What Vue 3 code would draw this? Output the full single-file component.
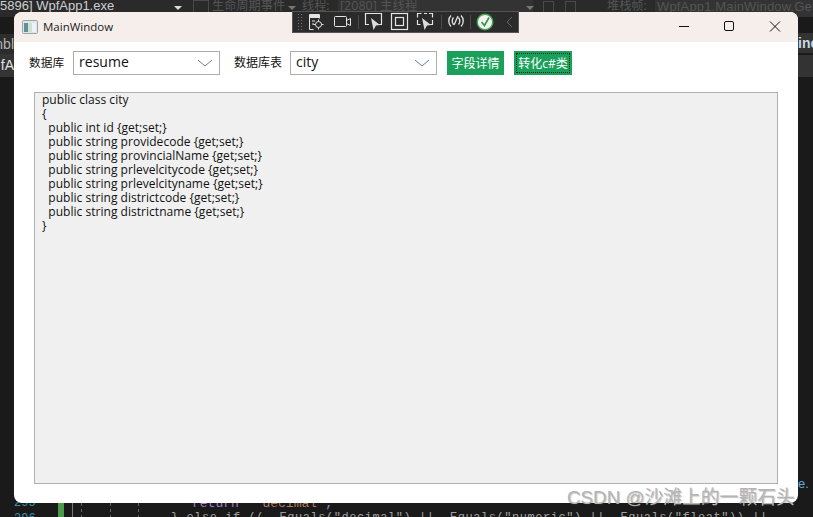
<script setup>
const code = [
  'public class city',
  '{',
  '  public int id {get;set;}',
  '  public string providecode {get;set;}',
  '  public string provincialName {get;set;}',
  '  public string prlevelcitycode {get;set;}',
  '  public string prlevelcityname {get;set;}',
  '  public string districtcode {get;set;}',
  '  public string districtname {get;set;}',
  '}'
].join('\n')
</script>

<template>
  <div class="desktop">
    <div class="ide-top">
      <span class="proc">5896] WpfApp1.exe</span>
      <i class="tri t1"></i>
      <span class="cell-icon"></span>
      <span class="dim life">生命周期事件</span>
      <i class="tri t2"></i>
      <span class="dim thread">线程:</span>
      <span class="dim threadbox">[2080] 主线程</span>
      <i class="tri t3"></i>
      <span class="mini m1"></span>
      <span class="mini m2"></span>
      <span class="dim stack">堆栈帧:</span>
      <span class="dim frame">WpfApp1.MainWindow.Get</span>
    </div>
    <div class="tab tab-a">nbl</div>
    <div class="tab tab-b">fA</div>
    <div class="tab tab-c">ine</div>
    <div class="tab tab-d"></div>
    <div class="ide-bottom">
      <span class="gutter g1">295</span>
      <span class="gutter g2">296</span>
      <span class="change"></span>
      <i class="guide solid"></i>
      <i class="guide d1"></i>
      <i class="guide d2"></i>
      <i class="guide d3"></i>
      <span class="ret"><b>return</b> <em>"decimal"</em>;</span>
      <span class="next">} else if ((    .Equals("decimal") ||      .Equals("numeric") ||      .Equals("float")) ||</span>
      <span class="stub">e.</span>
    </div>

    <section class="window">
      <header class="titlebar">
        <svg class="appicon" width="16" height="14" viewBox="0 0 16 14">
          <rect x="0.5" y="0.5" width="15" height="13" rx="1" fill="#dfe6ea" stroke="#9aa4ab" />
          <rect x="2" y="3" width="4" height="9" fill="#5f8f98" />
          <rect x="6" y="3" width="4" height="9" fill="#cfe2d0" />
          <rect x="10" y="3" width="4" height="9" fill="#eef2f4" />
        </svg>
        <span class="title">MainWindow</span>
        <div class="controls">
          <svg width="46" height="30" viewBox="0 0 46 30"><path d="M19 14.5h10" stroke="#111" stroke-width="1" /></svg>
          <svg width="46" height="30" viewBox="0 0 46 30"><rect x="18.5" y="9.5" width="9" height="9" rx="1.5" fill="none" stroke="#111" /></svg>
          <svg width="46" height="30" viewBox="0 0 46 30"><path d="M18 9.500l10 10M28 9.500l-10 10" stroke="#111" /></svg>
        </div>
      </header>
      <div class="form">
        <label class="lab first">数据库</label>
        <div class="combo">
          <span>resume</span>
          <svg width="16" height="8" viewBox="0 0 16 8"><path d="M1 1l7 6 7-6" fill="none" stroke="#5f7f9f" /></svg>
        </div>
        <label class="lab second">数据库表</label>
        <div class="combo">
          <span>city</span>
          <svg width="16" height="8" viewBox="0 0 16 8"><path d="M1 1l7 6 7-6" fill="none" stroke="#5f7f9f" /></svg>
        </div>
        <button class="btn b1" type="button">字段详情</button>
        <button class="btn b2" type="button"><span class="focus">转化c#类</span></button>
      </div>
      <pre class="code">{{ code }}</pre>
    </section>

    <div class="debugbar">
      <span class="grip"></span>
      <svg class="tools" width="160" height="20" viewBox="0 0 160 20" fill="none" stroke="#e4e4e4">
        <path d="M2.500 17.500v-15h10v4M2.500 5.500h10" />
        <path d="M2.500 4h10" stroke-width="2" />
        <path d="M5 9h3M5 12h2M2.500 17.500h4" />
        <circle cx="11.500" cy="12.500" r="3" />
        <path d="M11.500 7.500v2M11.500 15.500v2M6.500 12.500h2M14.500 12.500h2" />
        <rect x="27.500" y="4.500" width="12" height="10" rx="1" />
        <path d="M39.500 8.500l4-2v7l-4-2" />
        <path d="M62 12.500h-3.500v-11h16v11h-4" stroke-width="1.200" />
        <path d="M64 6l9 7-4 .5-2.500 4.500z" fill="#ddd" stroke="none" />
        <rect x="84.500" y="1.500" width="16" height="16" stroke-width="1.200" />
        <rect x="88.500" y="5.500" width="8" height="8" stroke-width="1.200" />
        <path d="M110.500 5.500v-4h4M117 1.500h3M122 1.500h3.500v4M110.500 8v4.500h3M125.500 8v4.500h-3" stroke-width="1.200" />
        <path d="M115 6l9 7-4 .5-2.500 4.500z" fill="#ddd" stroke="none" />
        <path d="M144 3.500c-3 3-3 8 0 11M154 3.500c3 3 3 8 0 11M146.500 5.500c-1.500 2-1.500 5 0 7M151.500 5.500c1.500 2 1.500 5 0 7M147 13l4-9" stroke-width="1.300" />
      </svg>
      <svg class="check" width="18" height="18" viewBox="0 0 18 18">
        <circle cx="9" cy="9" r="7.800" fill="#f2f2f2" stroke="#3fa34d" stroke-width="1.400" />
        <path d="M5.500 9l3 3.500L13 4.500" fill="none" stroke="#2f9a3f" stroke-width="1.600" />
      </svg>
      <svg class="back" width="7" height="12" viewBox="0 0 7 12"><path d="M6 1L1 6l5 5" fill="none" stroke="#666" /></svg>
      <i class="sep s1"></i><i class="sep s2"></i><i class="sep s3"></i>
    </div>

    <div class="mark">CSDN @沙滩上的一颗石头</div>
  </div>
</template>

<style>
html, body { margin: 0; background: #1a1a1a; }
</style>

<style scoped>
.desktop {
  position: relative;
  width: 813px;
  height: 517px;
  overflow: hidden;
  background: #1a1a1a;
  font-family: "Open Sans", "Noto Sans CJK SC", sans-serif;
}
.ide-top {
  position: absolute;
  inset: 0 0 auto 0;
  height: 17px;
  background: #2a2a2b;
  color: #cfcfcf;
  font-size: 13px;
  line-height: 14px;
  white-space: nowrap;
}
.ide-top > * { position: absolute; top: -1px; }
.proc { left: 0; font-family: "Liberation Sans", sans-serif; font-size: 13px; }
.dim { color: #555; }
.tri { width: 0; height: 0; border: 4px solid transparent; border-top: 4px solid #ddd; border-bottom: 0; top: 6px !important; }
.t1 { left: 174px; }
.t2 { left: 288px; border-top-color: #777; }
.t3 { left: 526px; border-top-color: #777; z-index: 1; }
.cell-icon { left: 193px; top: 0 !important; width: 14px; height: 11px; border: 1px solid #4a4a4a; }
.life { left: 212px; font-size: 12.200px; }
.thread { left: 302px; font-size: 12.200px; }
.threadbox { left: 338px; width: 193px; background: #333; height: 17px; top: 0 !important; padding-left: 2px; font-size: 12.500px; line-height: 12px; }
.mini { top: 1px !important; width: 9px; height: 10px; border: 1px solid #4a4a4a; }
.m1 { left: 543px; }
.m2 { left: 565px; }
.stack { left: 607px; font-size: 12.200px; }
.frame { left: 655px; width: 158px; background: #333; height: 17px; top: 0 !important; padding-left: 2px; font-family: "Liberation Sans", sans-serif; font-size: 13px; line-height: 13px; letter-spacing: .15px; }
.tab {
  position: absolute;
  height: 20px;
  line-height: 20px;
  color: #b5b5b5;
  font-size: 14px;
  font-family: "Liberation Sans", sans-serif;
  overflow: hidden;
}
.tab-a { left: 0; top: 34px; width: 14px; direction: rtl; background: #2c2c2c; }
.tab-b { left: 0; top: 54px; width: 14px; height: 23px; line-height: 23px; direction: rtl; color: #e0e0e0; background: #343434; }
.tab-c { left: 798px; top: 33px; width: 15px; color: #c9d7e0; font-weight: bold; background: #333; }
.tab-d { left: 798px; top: 55px; width: 15px; height: 22px; background: #333; }
.ide-bottom {
  position: absolute;
  inset: 503px 0 0 0;
  background: #1a1a1a;
  font-family: "Liberation Mono", monospace;
  font-size: 13px;
  white-space: nowrap;
}
.ide-bottom > * { position: absolute; }
.gutter { left: 14px; color: #3d8fa8; font-size: 12px; }
.g1 { top: -7px; }
.g2 { top: 9px; }
.change { left: 58px; top: 0; width: 6px; height: 14px; background: #4c9a4c; }
.guide { top: 0; bottom: 0; width: 1px; }
.solid { left: 72px; background: #777; }
.d1, .d2, .d3 { background: repeating-linear-gradient(#666 0 3px, transparent 3px 6px); }
.d1 { left: 81px; }
.d2 { left: 110px; }
.d3 { left: 138px; }
.ret { left: 192px; top: -7px; color: #a97cc8; }
.ret b { font-weight: normal; }
.ret em { font-style: normal; color: #b0795c; margin-left: 8px; }
.next { left: 171px; top: 8px; color: #a0a0a0; font-size: 12px; letter-spacing: .55px; }
.stub { left: 798px; top: -27px; color: #5fa8d8; font-family: "Liberation Sans", sans-serif; }
.window {
  position: absolute;
  left: 14px;
  top: 12px;
  width: 784px;
  height: 491px;
  background: #fff;
  border-radius: 8px;
  overflow: hidden;
  display: flex;
  flex-direction: column;
}
.titlebar {
  height: 30px;
  flex: none;
  background: #f6eeeb;
  display: flex;
  align-items: center;
  padding-left: 8px;
}
.appicon { margin-right: 5px; }
.title {
  font-size: 11.500px;
  color: #1a1a1a;
  padding-bottom: 2px;
}
.controls { margin-left: auto; display: flex; }
.controls svg { display: block; }
.form {
  height: 24px;
  margin: 9px 0 0 15px;
  display: flex;
  align-items: center;
}
.lab { font-size: 11.700px; color: #111; white-space: nowrap; padding-bottom: 3px; }
.second { margin-left: 14px; font-size: 12px; margin-right: 8px; }
.first { margin-right: 9px; }
.combo {
  width: 147px;
  height: 24px;
  box-sizing: border-box;
  border: 1px solid #acacac;
  padding: 0 5px;
  display: flex;
  align-items: center;
  justify-content: space-between;
  font-size: 14px;
  color: #111;
  background: #fff;
}
.combo span { padding-bottom: 3px; }
.combo svg { margin-right: 1px; }
.btn {
  height: 24px;
  width: 58px;
  padding: 0;
  border: 0;
  background: #1aa05a;
  color: #fff;
  font: 12px "Open Sans", "Noto Sans CJK SC", sans-serif;
}
.b1 { margin-left: 10px; width: 57px; }
.b2 { margin-left: 10px; padding: 2px; }
.focus {
  display: flex;
  align-items: center;
  justify-content: center;
  height: 100%;
  box-sizing: border-box;
  border: 1px dotted #0b2a18;
}
.code {
  margin: 17px 20px 19px 20px;
  flex: 1;
  box-sizing: border-box;
  border: 1px solid #b0b0b0;
  background: #f0f0f0;
  padding: 0 7px;
  font: 12px/14px "Open Sans", sans-serif;
  letter-spacing: .03px;
  color: #111;
  white-space: pre;
  overflow: hidden;
}
.debugbar {
  position: absolute;
  left: 292px;
  top: 11px;
  width: 227px;
  height: 22px;
  box-sizing: border-box;
  border: 1px solid #555;
  background: #2b2b2b;
}
.debugbar > * { position: absolute; }
.grip {
  left: 4px; top: 1px; width: 6px; height: 18px;
  background-image: radial-gradient(#777 .7px, transparent .8px);
  background-size: 3px 3px;
}
.tools { left: 14px; top: 0; }
.check { left: 183px; top: 1px; }
.back { left: 213px; top: 4px; }
.sep { width: 1px; height: 14px; top: 3px; background: #4a4a4a; }
.s1 { left: 65px; }
.s2 { left: 148px; }
.s3 { left: 177px; }
.mark {
  position: absolute;
  left: 567px;
  top: 486px;
  font-family: "Liberation Sans", "Noto Sans CJK SC", sans-serif;
  font-size: 18.800px;
  line-height: 24px;
  color: #b4b4b4;
  text-shadow: 1px 1px 1px rgba(50, 50, 50, .3);
  white-space: nowrap;
}
</style>
